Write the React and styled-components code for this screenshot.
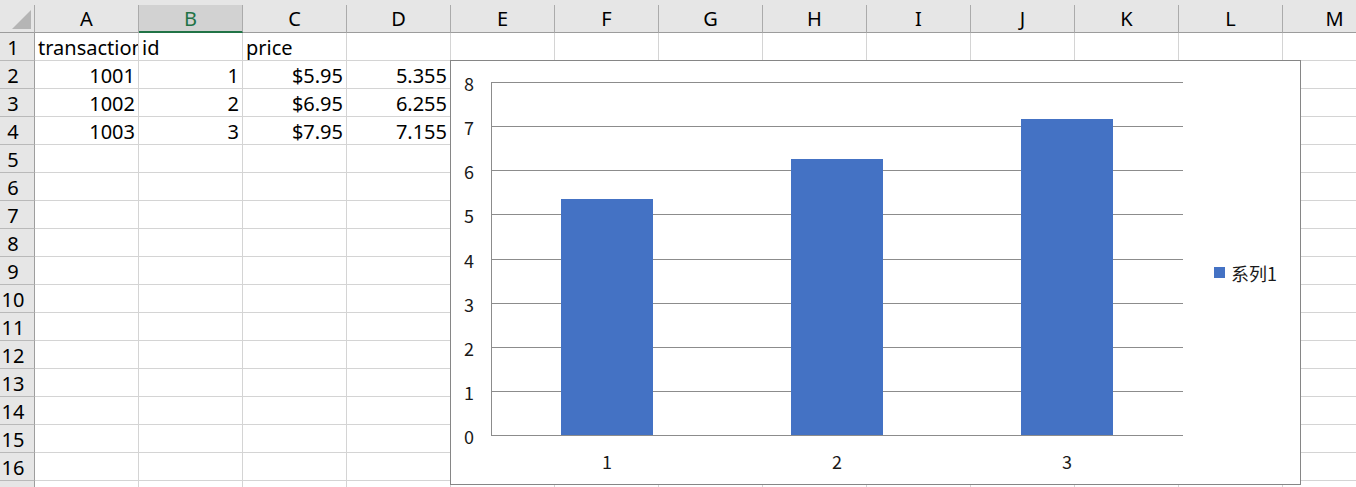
import React from 'react';
import styled, { createGlobalStyle } from 'styled-components';

const Global = createGlobalStyle`
  *, *::before, *::after { box-sizing: border-box; }
  html, body { margin: 0; padding: 0; background: #fff; overflow: hidden; }
`;

const Sheet = styled.div`
  position: relative;
  width: 1356px;
  height: 487px;
  overflow: hidden;
  background: #fff;
  font-family: "Noto Sans", "Noto Sans CJK SC", sans-serif;
  font-size: 20px;
  color: #000;
`;

const HeaderRow = styled.div`
  display: flex;
  height: 33px;
  padding-top: 5px;
  background: #e6e6e6;
`;

const Corner = styled.div`
  flex: 0 0 35px;
  height: 28px;
  border-right: 1px solid #a9a9a9;
  border-bottom: 1px solid #9c9c9c;
  display: flex;
  align-items: flex-end;
  justify-content: flex-end;
  padding: 0 3px 3px 0;
`;

const ColHead = styled.div`
  flex: 0 0 104px;
  height: 28px;
  border-right: 1px solid #ababab;
  border-bottom: ${p => (p.$selected ? '2px solid #217346' : '1px solid #9c9c9c')};
  background: ${p => (p.$selected ? '#d2d2d2' : 'transparent')};
  color: ${p => (p.$selected ? '#217346' : '#000')};
  text-align: center;
  padding-top: 1px;
  line-height: 26px;
  white-space: nowrap;
`;

const Row = styled.div`
  display: flex;
  height: 28px;
`;

const RowHead = styled.div`
  flex: 0 0 35px;
  height: 28px;
  background: #e6e6e6;
  border-right: 1px solid #9e9e9e;
  border-bottom: 1px solid #b9b9b9;
  padding: 3px 8px 0 0;
  line-height: 24px;
  text-align: center;
  white-space: nowrap;
  overflow: hidden;
`;

const Cell = styled.div`
  flex: 0 0 104px;
  height: 28px;
  border-right: 1px solid #d4d4d4;
  border-bottom: 1px solid #d4d4d4;
  padding: 3px 3px 0 3px;
  line-height: 24px;
  overflow: hidden;
  white-space: nowrap;
  text-align: ${p => p.$align || 'left'};
`;

const Chart = styled.div`
  position: absolute;
  left: 450px;
  top: 60px;
  width: 851px;
  height: 425px;
  border: 1px solid #868686;
  background: #fff;
`;

const ChartSvg = styled.svg`
  display: block;
  font-family: "Noto Sans CJK SC", "Noto Sans", sans-serif;
`;

const COLS = ['A', 'B', 'C', 'D', 'E', 'F', 'G', 'H', 'I', 'J', 'K', 'L', 'M'];

const DATA = {
  1: [
    { v: 'transaction' },
    { v: 'id' },
    { v: 'price' },
  ],
  2: [
    { v: '1001', a: 'right' },
    { v: '1', a: 'right' },
    { v: '$5.95', a: 'right' },
    { v: '5.355', a: 'right' },
  ],
  3: [
    { v: '1002', a: 'right' },
    { v: '2', a: 'right' },
    { v: '$6.95', a: 'right' },
    { v: '6.255', a: 'right' },
  ],
  4: [
    { v: '1003', a: 'right' },
    { v: '3', a: 'right' },
    { v: '$7.95', a: 'right' },
    { v: '7.155', a: 'right' },
  ],
};

const VALUES = [5.355, 6.255, 7.155];
const X0 = 40;
const X1 = 732;
const Y0 = 374;
const STEP = 44.125;
const GRID = '#8c8c8c';
const BAR = '#4472c4';
const TEXT = '#1a1a1a';

function BarChart() {
  const gy = v => Math.round(Y0 - v * STEP) + 0.5;
  return (
    <ChartSvg width="849" height="423" viewBox="0 0 849 423">
      {[1, 2, 3, 4, 5, 6, 7, 8].map(v => (
        <line key={v} x1={X0} x2={X1} y1={gy(v)} y2={gy(v)} stroke={GRID} strokeWidth="1" />
      ))}
      {VALUES.map((v, i) => {
        const top = Math.round(Y0 - v * STEP);
        return <rect key={i} x={110 + 230 * i} y={top} width="92" height={Y0 - top} fill={BAR} />;
      })}
      <line x1={X0} x2={X1} y1={Y0 + 0.5} y2={Y0 + 0.5} stroke={GRID} strokeWidth="1" />
      <line x1={X0 + 0.5} x2={X0 + 0.5} y1={gy(8)} y2={Y0 + 1} stroke={GRID} strokeWidth="1" />
      {[0, 1, 2, 3, 4, 5, 6, 7, 8].map(v => (
        <text key={v} x="23" y={gy(v) + 0.5} textAnchor="end" dominantBaseline="central" fontSize="18" fill={TEXT}>
          {v}
        </text>
      ))}
      {[1, 2, 3].map((c, i) => (
        <text key={c} x={156 + 230 * i} y="400" textAnchor="middle" dominantBaseline="central" fontSize="18" fill={TEXT}>
          {c}
        </text>
      ))}
      <rect x="763" y="206" width="11" height="11" fill={BAR} />
      <text x="780" y="211.5" dominantBaseline="central" fontSize="18" fill={TEXT}>
        系列1
      </text>
    </ChartSvg>
  );
}

export default function App() {
  const rows = Array.from({ length: 17 }, (_, i) => i + 1);
  return (
    <>
      <Global />
      <Sheet>
        <HeaderRow>
          <Corner>
            <svg width="19" height="19" viewBox="0 0 19 19">
              <polygon points="19,0 19,19 0,19" fill="#b5b5b5" />
            </svg>
          </Corner>
          {COLS.map(c => (
            <ColHead key={c} $selected={c === 'B'}>
              {c}
            </ColHead>
          ))}
        </HeaderRow>
        {rows.map(r => (
          <Row key={r}>
            <RowHead>{r <= 16 ? r : ''}</RowHead>
            {COLS.map((c, ci) => {
              const d = DATA[r] && DATA[r][ci];
              return (
                <Cell key={c} $align={d && d.a}>
                  {d ? d.v : ''}
                </Cell>
              );
            })}
          </Row>
        ))}
        <Chart>
          <BarChart />
        </Chart>
      </Sheet>
    </>
  );
}
